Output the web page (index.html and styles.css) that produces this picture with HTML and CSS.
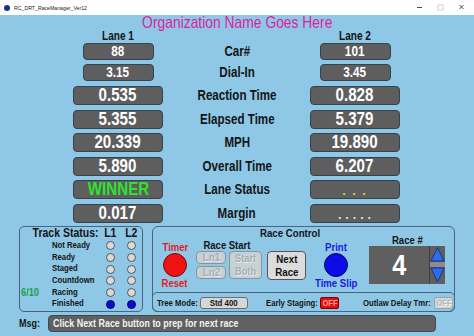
FILE: index.html
```html
<!DOCTYPE html>
<html>
<head>
<meta charset="utf-8">
<title>RC_DRT_RaceManager_Ver12</title>
<link rel="stylesheet" href="styles.css">
</head>
<body>
<div class="titlebar">
  <span class="app-icon"></span>
  <span class="win-title"><span class="sx sx-l">RC_DRT_RaceManager_Ver12</span></span>
  <div class="win-ctrls">
    <svg class="wc" viewBox="0 0 21 15"><path d="M8 7.5H13" stroke="#222" stroke-width="0.8"/></svg>
    <svg class="wc" viewBox="0 0 21 15"><rect x="8" y="5" width="5" height="5" fill="none" stroke="#c4c4c4" stroke-width="0.8"/></svg>
    <svg class="wc" viewBox="0 0 21 15"><path d="M8.5 5L12.5 9M12.5 5L8.5 9" stroke="#222" stroke-width="0.8"/></svg>
  </div>
</div>

<div class="org"><span class="sx">Organization Name Goes Here</span></div>

<div class="board">
  <div class="lane-h"><span class="sx">Lane 1</span></div>
  <div></div>
  <div class="lane-h"><span class="sx">Lane 2</span></div>

  <div class="val sm"><span class="sx">88</span></div>
  <div class="lbl sm"><span class="sx">Car#</span></div>
  <div class="val sm"><span class="sx">101</span></div>

  <div class="val sm"><span class="sx">3.15</span></div>
  <div class="lbl sm"><span class="sx">Dial-In</span></div>
  <div class="val sm"><span class="sx">3.45</span></div>

  <div class="val lg"><span class="sx">0.535</span></div>
  <div class="lbl lg"><span class="sx">Reaction Time</span></div>
  <div class="val lg"><span class="sx">0.828</span></div>

  <div class="val lg"><span class="sx">5.355</span></div>
  <div class="lbl lg"><span class="sx">Elapsed Time</span></div>
  <div class="val lg"><span class="sx">5.379</span></div>

  <div class="val lg"><span class="sx">20.339</span></div>
  <div class="lbl lg"><span class="sx">MPH</span></div>
  <div class="val lg"><span class="sx">19.890</span></div>

  <div class="val lg"><span class="sx">5.890</span></div>
  <div class="lbl lg"><span class="sx">Overall Time</span></div>
  <div class="val lg"><span class="sx">6.207</span></div>

  <div class="val lg"><span class="sx winner">WINNER</span></div>
  <div class="lbl lg"><span class="sx">Lane Status</span></div>
  <div class="val lg"><span class="sx dots3">. . .</span></div>

  <div class="val lg"><span class="sx">0.017</span></div>
  <div class="lbl lg"><span class="sx">Margin</span></div>
  <div class="val lg"><span class="sx dots5">. . . . .</span></div>
</div>

<div class="lower">
  <div class="track">
    <div class="ts-head"><span class="sx sx-r">Track Status:</span></div>
    <div class="ts-l"><span class="sx">L1</span></div>
    <div class="ts-l"><span class="sx">L2</span></div>

    <div></div>
    <div class="ts-name"><span class="sx sx-l">Not Ready</span></div>
    <span class="dot"></span><span class="dot"></span>

    <div></div>
    <div class="ts-name"><span class="sx sx-l">Ready</span></div>
    <span class="dot"></span><span class="dot"></span>

    <div></div>
    <div class="ts-name"><span class="sx sx-l">Staged</span></div>
    <span class="dot"></span><span class="dot"></span>

    <div></div>
    <div class="ts-name"><span class="sx sx-l">Countdown</span></div>
    <span class="dot"></span><span class="dot"></span>

    <div class="ratio"><span class="sx sx-l">6/10</span></div>
    <div class="ts-name"><span class="sx sx-l">Racing</span></div>
    <span class="dot"></span><span class="dot"></span>

    <div></div>
    <div class="ts-name"><span class="sx sx-l">Finished</span></div>
    <span class="dot on"></span><span class="dot on"></span>
  </div>

  <div class="rc">
    <div class="rc-top">
      <div class="lamp-grp timer">
        <div class="lamp-txt"><span class="sx">Timer</span></div>
        <span class="lamp red"></span>
        <div class="lamp-txt"><span class="sx">Reset</span></div>
      </div>
      <div class="start-grp">
        <div class="rc-head"><span class="sx sx-l">Race Control</span></div>
        <div class="start-row">
          <div class="start-col">
            <div class="start-lbl"><span class="sx">Race Start</span></div>
            <div class="start-btns">
              <div class="ln-col">
                <div class="btn off-btn ln"><span class="sx">Ln1</span></div>
                <div class="btn off-btn ln"><span class="sx">Ln2</span></div>
              </div>
              <div class="btn off-btn both"><span class="sx">Start<br>Both</span></div>
            </div>
          </div>
          <div class="btn next"><span class="sx">Next<br>Race</span></div>
        </div>
      </div>
      <div class="lamp-grp print">
        <div class="lamp-txt"><span class="sx">Print</span></div>
        <span class="lamp blue"></span>
        <div class="lamp-txt"><span class="sx">Time Slip</span></div>
      </div>
      <div class="race-num">
        <div class="rn-lbl"><span class="sx">Race #</span></div>
        <div class="rn-box">
          <div class="rn-val"><span class="sx">4</span></div>
          <div class="rn-arrows">
            <svg viewBox="0 0 15 38" width="15" height="38">
              <rect x="0" y="16" width="15" height="5" fill="#8c8c8c"/>
              <polygon points="7.5,1.5 1,15 14,15" fill="#2b6cf0" stroke="#0c2a7a" stroke-width="0.8"/>
              <polygon points="1,22 14,22 7.5,36" fill="#2b6cf0" stroke="#0c2a7a" stroke-width="0.8"/>
            </svg>
          </div>
        </div>
      </div>
    </div>
    <div class="rc-bot">
      <div class="bl w-tree"><span class="sx sx-l">Tree Mode:</span></div>
      <div class="btn std"><span class="sx">Std 400</span></div>
      <div class="bl w-early"><span class="sx sx-l">Early Staging:</span></div>
      <div class="btn off-red"><span class="sx">OFF</span></div>
      <div class="bl w-outlaw"><span class="sx sx-l">Outlaw Delay Tmr:</span></div>
      <div class="btn off-grey"><span class="sx">OFF</span></div>
    </div>
  </div>
</div>

<div class="msg-row">
  <div class="msg-lbl"><span class="sx sx-l">Msg:</span></div>
  <div class="msg-box"><span class="sx sx-l">Click Next Race button to prep for next race</span></div>
</div>
</body>
</html>
```

FILE: styles.css
```css
html, body {
  margin: 0;
  padding: 0;
}
body {
  width: 474px;
  height: 336px;
  overflow: hidden;
  background: #8ec8e6;
  font-family: "Liberation Sans", Arial, sans-serif;
  font-weight: bold;
  color: #141414;
}

.sx {
  display: inline-block;
  white-space: nowrap;
  transform: scaleX(0.84);
}
.sx-l { transform-origin: left center; }
.sx-r { transform-origin: right center; }

/* window title bar */
.titlebar {
  height: 15px;
  background: #ffffff;
  display: flex;
  align-items: center;
  padding-left: 4px;
}
.app-icon {
  width: 6px;
  height: 6px;
  border-radius: 50%;
  background: #1b2f8c;
  margin-right: 4px;
}
.win-title {
  font-size: 6.2px;
  font-weight: normal;
  color: #222;
  line-height: 15px;
}
.win-ctrls {
  margin-left: auto;
  display: flex;
  padding-right: 2px;
}
.wc {
  width: 21px;
  height: 15px;
  display: block;
}

/* organisation title */
.org {
  height: 15px;
  line-height: 15px;
  text-align: center;
  font-size: 16.5px;
  font-weight: normal;
  color: #dc1f9c;
}

/* lane board */
.board {
  display: grid;
  grid-template-columns: 120px 118px 118px;
  grid-template-rows: 13px 21px 22px 23.6px 23.6px 23.6px 23.6px 23.6px 22px;
  padding-left: 58px;
  justify-items: center;
  align-items: start;
}
.lane-h {
  font-size: 12px;
  line-height: 13px;
}
.val {
  box-sizing: border-box;
  background: #5e5e5e;
  border: 1px solid #33444f;
  border-radius: 4px;
  color: #ffffff;
  text-align: center;
}
.val.sm {
  width: 71px;
  height: 17px;
  font-size: 14px;
  line-height: 15px;
}
.val.lg {
  width: 90px;
  height: 19px;
  font-size: 18px;
  line-height: 17px;
}
.lbl {
  font-size: 13.8px;
  text-align: center;
}
.lbl.sm { line-height: 17px; }
.lbl.lg { line-height: 19px; }
.winner { color: #2fe22f; }
.dots3 {
  color: #e6e61e;
  font-size: 13px;
  letter-spacing: 2.4px;
}
.dots5 {
  color: #f2f2f2;
  font-size: 13px;
  letter-spacing: 0.8px;
}

/* lower panels */
.lower {
  display: flex;
  gap: 9px;
  padding-left: 19px;
}
.track {
  width: 124px;
  height: 86px;
  box-sizing: border-box;
  border: 1px solid #4a6578;
  border-radius: 5px;
  display: grid;
  grid-template-columns: 29px 50px 22px 21px;
  grid-template-rows: 13px repeat(6, 11.7px);
  align-items: center;
  justify-items: center;
}
.ts-head {
  grid-column: 1 / 3;
  justify-self: end;
  font-size: 12.5px;
  line-height: 13px;
}
.ts-l {
  font-size: 12.5px;
  line-height: 13px;
}
.ts-name {
  justify-self: start;
  padding-left: 3px;
  font-size: 9.2px;
  line-height: 11.7px;
}
.ratio {
  justify-self: start;
  padding-left: 1px;
  font-size: 11px;
  line-height: 11.7px;
  color: #1f9e48;
}
.dot {
  width: 9px;
  height: 9px;
  box-sizing: border-box;
  border-radius: 50%;
  border: 1px solid #555;
  background: #dadada;
}
.dot.on {
  background: #0b0bd6;
  border-color: #04045a;
}

/* race control */
.rc {
  width: 303px;
  height: 86px;
  box-sizing: border-box;
  border: 1px solid #4a6578;
  border-radius: 6px;
  display: flex;
  flex-direction: column;
}
.rc-top {
  height: 65px;
  display: flex;
  align-items: flex-start;
}
.lamp-grp {
  width: 44px;
  margin-top: 14px;
  display: flex;
  flex-direction: column;
  align-items: center;
  font-size: 11.4px;
}
.lamp-txt {
  line-height: 12px;
}
.timer { color: #e21c1c; }
.print { color: #1a1ae0; margin-left: 8px; }
.lamp {
  width: 24px;
  height: 24px;
  box-sizing: border-box;
  border-radius: 50%;
}
.lamp.red {
  background: #f01212;
  border: 1px solid #7a0a0a;
}
.lamp.blue {
  background: #0c0ce6;
  border: 1px solid #06065e;
}
.start-grp {
  width: 110px;
  margin-left: -1px;
}
.rc-head {
  height: 12px;
  line-height: 12px;
  padding-left: 64px;
  font-size: 11.5px;
  white-space: nowrap;
}
.start-row {
  display: flex;
  align-items: flex-end;
}
.start-col {
  width: 66px;
}
.start-lbl {
  height: 12px;
  line-height: 12px;
  font-size: 11.3px;
  text-align: center;
  padding-right: 5px;
}
.start-btns {
  display: flex;
  gap: 3px;
}
.ln-col {
  width: 30px;
  display: flex;
  flex-direction: column;
  gap: 2px;
}
.btn {
  box-sizing: border-box;
  border-radius: 4px;
  display: flex;
  align-items: center;
  justify-content: center;
  text-align: center;
  line-height: 12px;
}
.off-btn {
  background: #c6d0d5;
  border: 1px solid #87949b;
  color: #a6aeb2;
  text-shadow: 1px 1px 0 #e8eef1;
  font-size: 11.8px;
}
.ln {
  height: 13px;
}
.both {
  width: 33px;
  height: 28px;
  font-size: 11px;
  line-height: 13px;
}
.next {
  width: 39px;
  height: 29px;
  margin-left: 5px;
  margin-bottom: -1px;
  background: #dcdcdc;
  border: 1px solid #555;
  color: #111;
  font-size: 11.6px;
  line-height: 13px;
}
.race-num {
  width: 76px;
  margin-left: 11px;
  margin-top: 7px;
}
.rn-lbl {
  height: 12px;
  line-height: 12px;
  font-size: 11.4px;
  text-align: center;
}
.rn-box {
  height: 38px;
  display: flex;
  background: #5f5f5f;
}
.rn-val {
  flex: 1;
  text-align: center;
  color: #ffffff;
  font-size: 30px;
  line-height: 38px;
}
.rn-arrows {
  width: 15px;
  border-left: 1px solid #3e3e3e;
}
.rn-arrows svg {
  display: block;
}

.rc-bot {
  height: 20px;
  margin: 0 -1px -1px -1px;
  box-sizing: border-box;
  border: 1px solid #4a6578;
  border-radius: 5px;
  display: flex;
  align-items: center;
  padding: 2px 0 0 4px;
  font-size: 9.2px;
}
.bl {
  line-height: 12px;
  white-space: nowrap;
}
.w-tree { width: 40px; }
.w-early { width: 52px; margin-left: 18px; }
.w-outlaw { width: 69px; margin-left: 24px; }
.std {
  width: 48px;
  height: 12px;
  margin-left: 3px;
  background: #d6d6d6;
  border: 1px solid #6e6e6e;
  border-radius: 3px;
  font-size: 9.4px;
  line-height: 10px;
}
.off-red {
  width: 19px;
  height: 12px;
  margin-left: 2px;
  background: #e01010;
  border: 1px solid #7a0000;
  border-radius: 2px;
  color: #ff9c9c;
  font-size: 9px;
  line-height: 10px;
}
.off-grey {
  width: 19px;
  height: 12px;
  margin-left: 2px;
  background: #d2d6d8;
  border: 1px solid #9aa1a5;
  border-radius: 2px;
  color: #b4b9bc;
  text-shadow: 1px 1px 0 #f0f3f4;
  font-size: 9px;
  line-height: 10px;
}

/* message row */
.msg-row {
  display: flex;
  align-items: center;
  margin-top: 3px;
  padding-left: 19px;
}
.msg-lbl {
  width: 29px;
  font-size: 10.7px;
  line-height: 17px;
}
.msg-box {
  width: 388px;
  height: 17px;
  box-sizing: border-box;
  background: #606060;
  border: 1px solid #3a4a55;
  border-radius: 4px;
  padding-left: 4px;
  color: #f4f4f4;
  font-size: 10.6px;
  line-height: 15px;
}
```
